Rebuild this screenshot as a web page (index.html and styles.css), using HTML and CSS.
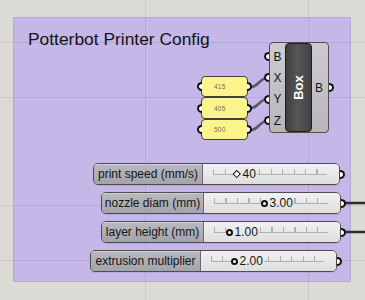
FILE: index.html
```html
<!DOCTYPE html>
<html>
<head>
<meta charset="utf-8">
<link rel="stylesheet" href="styles.css">
</head>
<body>
<div class="canvas">
  <div class="group">
    <div class="group-title">Potterbot Printer Config</div>
  </div>
  <div class="grid"></div>

  <svg class="wires" width="365" height="300" viewBox="0 0 365 300">
    <path class="wire" d="M251 87 C258 87 260 78 267 78"/>
    <path class="wire" d="M251 108 C258 108 260 99 267 99"/>
    <path class="wire" d="M251 130 C258 130 260 121 267 121"/>
    <path class="wire dark" d="M343 203 L365 203"/>
    <path class="wire dark" d="M343 232 L365 232"/>
  </svg>

  <div class="panels">
    <div class="panel"><span class="port in"></span><span class="panel-text">415</span><span class="port out"></span></div>
    <div class="panel"><span class="port in"></span><span class="panel-text">405</span><span class="port out"></span></div>
    <div class="panel"><span class="port in"></span><span class="panel-text">500</span><span class="port out"></span></div>
  </div>

  <div class="box">
    <div class="box-inputs">
      <div class="box-param"><span class="port in"></span>B</div>
      <div class="box-param"><span class="port in"></span>X</div>
      <div class="box-param"><span class="port in"></span>Y</div>
      <div class="box-param"><span class="port in"></span>Z</div>
    </div>
    <div class="box-name"><span class="box-name-text">Box</span></div>
    <div class="box-outputs">
      <div class="box-param out-param">B<span class="port out"></span></div>
    </div>
  </div>

  <div class="slider s1">
    <div class="slider-label">print speed (mm/s)</div>
    <div class="slider-track">
      <div class="ticks"></div>
      <div class="slider-value" style="left:30px"><span class="knob diamond"></span><span>40</span></div>
      <span class="port out"></span>
    </div>
  </div>
  <div class="slider s2">
    <div class="slider-label">nozzle diam (mm)</div>
    <div class="slider-track">
      <div class="ticks"></div>
      <div class="slider-value" style="left:57px"><span class="knob"></span><span>3.00</span></div>
      <span class="port out"></span>
    </div>
  </div>
  <div class="slider s3">
    <div class="slider-label">layer height (mm)</div>
    <div class="slider-track">
      <div class="ticks"></div>
      <div class="slider-value" style="left:22px"><span class="knob"></span><span>1.00</span></div>
      <span class="port out"></span>
    </div>
  </div>
  <div class="slider s4">
    <div class="slider-label">extrusion multiplier</div>
    <div class="slider-track">
      <div class="ticks"></div>
      <div class="slider-value" style="left:30px"><span class="knob"></span><span>2.00</span></div>
      <span class="port out"></span>
    </div>
  </div>
</div>
</body>
</html>
```
FILE: styles.css
```css
* { box-sizing: border-box; }
html, body { margin: 0; padding: 0; }
body { font-family: "Liberation Sans", Arial, sans-serif; color: #151515; }

.canvas {
  position: relative;
  width: 365px;
  height: 300px;
  overflow: hidden;
  background: #dcdad5;
}

.group {
  position: absolute;
  left: 13px;
  top: 17px;
  width: 338px;
  height: 265px;
  background: #c5b7e7;
  border: 1px solid #b7aad8;
  padding: 11px 14px;
}
.group-title {
  font-size: 17.4px;
  line-height: 20px;
  color: #141414;
}

.grid {
  position: absolute;
  inset: 0;
  background-image:
    linear-gradient(to right, transparent 145px, rgba(0,0,0,0.075) 145px, rgba(0,0,0,0.075) 146px, transparent 146px),
    linear-gradient(to right, transparent 308px, rgba(0,0,0,0.075) 308px, rgba(0,0,0,0.075) 309px, transparent 309px),
    linear-gradient(to bottom, transparent 42px, rgba(0,0,0,0.075) 42px, rgba(0,0,0,0.075) 43px, transparent 43px),
    linear-gradient(to bottom, transparent 97px, rgba(0,0,0,0.075) 97px, rgba(0,0,0,0.075) 98px, transparent 98px),
    linear-gradient(to bottom, transparent 205px, rgba(0,0,0,0.075) 205px, rgba(0,0,0,0.075) 206px, transparent 206px),
    linear-gradient(to bottom, transparent 260px, rgba(0,0,0,0.075) 260px, rgba(0,0,0,0.075) 261px, transparent 261px);
}

.wires { position: absolute; left: 0; top: 0; }
.wire { fill: none; stroke: #5b5862; stroke-width: 2.6; stroke-linecap: round; }
.wire.dark { stroke: #2e2e2e; }

/* ports: half rings */
.port {
  position: absolute;
  top: 50%;
  width: 5px;
  height: 9px;
  margin-top: -4.5px;
  background: #fff;
  border: 2px solid #111;
}
.port.in {
  left: -5px;
  border-right: none;
  border-radius: 5px 0 0 5px / 4.5px 0 0 4.5px;
}
.port.out {
  right: -5px;
  border-left: none;
  border-radius: 0 5px 5px 0 / 0 4.5px 4.5px 0;
}

/* yellow number panels */
.panels {
  position: absolute;
  left: 201px;
  top: 76px;
  width: 47px;
  display: flex;
  flex-direction: column;
}
.panel {
  position: relative;
  height: 21.4px;
  background: #fbf48d;
  border: 1px solid #3e3e3e;
  border-radius: 4px;
  display: flex;
  align-items: center;
  padding-left: 12px;
}
.panel-text {
  font-size: 6.5px;
  color: #6f6c48;
  letter-spacing: 0.2px;
}

/* Box component */
.box {
  position: absolute;
  left: 269px;
  top: 42px;
  width: 60px;
  height: 91px;
  display: flex;
  background: linear-gradient(to bottom, #cbcbd0, #b6b6bc);
  border: 1px solid #4f4f4f;
  border-radius: 4px;
}
.box-inputs {
  width: 15px;
  display: grid;
  grid-template-rows: repeat(4, 21.3px);
  padding-top: 3px;
}
.box-param {
  position: relative;
  display: flex;
  align-items: center;
  justify-content: center;
  font-size: 12px;
  line-height: 1;
}
.box-param .port.in { left: -6px; }
.box-name {
  width: 27px;
  background: linear-gradient(to right, #3f3f3f, #565656 45%, #444);
  border: 1px solid #1f1f1f;
  border-radius: 4px;
  display: flex;
  align-items: center;
  justify-content: center;
}
.box-name-text {
  transform: rotate(-90deg);
  color: #fff;
  font-weight: bold;
  font-size: 13px;
  white-space: nowrap;
}
.box-outputs {
  flex: 1;
  display: flex;
  align-items: center;
}
.out-param {
  flex: 1;
  height: 21px;
  padding-right: 2px;
}
.out-param .port.out { right: -6px; }

/* sliders */
.slider {
  position: absolute;
  height: 22px;
  display: flex;
  border: 1px solid #4d4d4d;
  border-radius: 5px;
  box-shadow: 0 1px 0 rgba(0,0,0,0.08);
}
.s1 { left: 93px; top: 163px; width: 247px; }
.s1 .slider-label { width: 109px; }
.s2 { left: 101px; top: 192px; width: 240px; }
.s2 .slider-label { width: 102px; }
.s3 { left: 101px; top: 221px; width: 240px; }
.s3 .slider-label { width: 102px; }
.s4 { left: 90px; top: 250px; width: 247px; }
.s4 .slider-label { width: 110px; }

.slider-label {
  display: flex;
  align-items: center;
  justify-content: center;
  font-size: 12px;
  white-space: nowrap;
  background: linear-gradient(to bottom, #b9b9c0, #a3a3ab);
  border-right: 1px solid #6a6a70;
  border-radius: 4px 0 0 4px;
  box-shadow: inset 0 1px 0 rgba(255,255,255,0.35);
}
.slider-track {
  position: relative;
  flex: 1;
  background: linear-gradient(to bottom, #f1f1f1, #dedede);
  border-radius: 0 4px 4px 0;
}
.slider-track .port.out { right: -6px; }
.ticks {
  position: absolute;
  left: 10px;
  right: 12px;
  top: 5px;
  height: 6px;
  border-bottom: 1px solid #b0b0b0;
  background-image: repeating-linear-gradient(to right, #b0b0b0 0 1px, transparent 1px 11.5px);
}
.slider-value {
  position: absolute;
  top: 0;
  bottom: 0;
  display: flex;
  align-items: center;
  gap: 1.5px;
  padding-right: 1px;
  font-size: 12px;
  background: linear-gradient(to bottom, #f1f1f1, #dedede);
}
.knob {
  width: 7px;
  height: 7px;
  border: 2px solid #111;
  border-radius: 50%;
  background: #fff;
}
.knob.diamond {
  width: 5.5px;
  height: 5.5px;
  border-width: 1.6px;
  border-radius: 0;
  transform: rotate(45deg);
  margin: 0 1.5px 0 1px;
}
```
